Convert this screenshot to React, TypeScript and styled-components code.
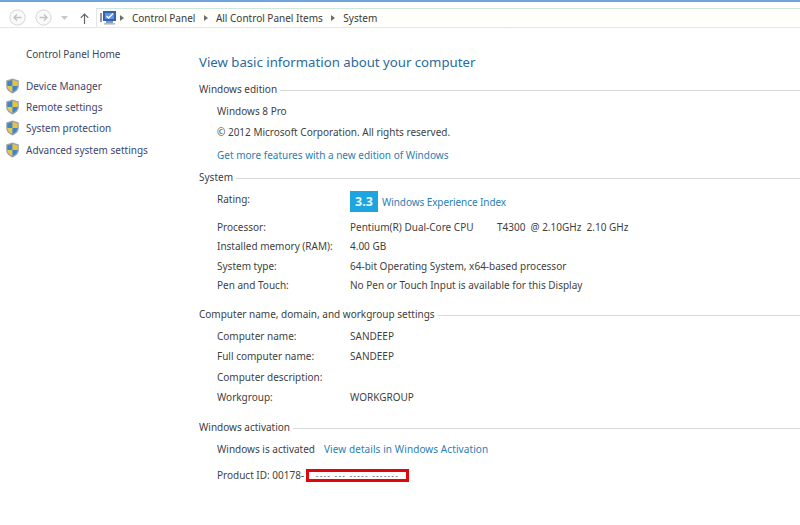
import React from "react";
import styled, { createGlobalStyle } from "styled-components";

const GlobalStyle = createGlobalStyle`
  html, body { margin: 0; padding: 0; background: #fff; }
  body { font-family: "Noto Sans", "Open Sans", sans-serif; font-size: 10px; color: #3f3f3f; }
`;

const Window = styled.div`
  width: 800px;
  height: 525px;
  overflow: hidden;
  background: #fff;
  display: flex;
  flex-direction: column;
`;

const TitleStrip = styled.div`
  height: 2px;
  background: #6fa3dc;
  flex: none;
`;

const Toolbar = styled.div`
  height: 26px;
  box-sizing: border-box;
  padding-top: 6px;
  display: flex;
  align-items: flex-start;
  flex: none;
  border-bottom: 1px solid #e6e6e6;
`;

const NavGroup = styled.div`
  width: 96px;
  height: 19px;
  flex: none;
  display: flex;
  align-items: center;
  padding-left: 9px;
  box-sizing: border-box;
`;

const AddressBar = styled.div`
  flex: 1;
  height: 19px;
  display: flex;
  align-items: center;
  box-sizing: border-box;
  border-top: 1px solid #cfe6e4;
  border-left: 1px solid #e6e6e6;
  background: linear-gradient(#fffef6, #fff);
  padding-left: 3px;
  color: #3a3a3a;
`;

const Crumb = styled.span`
  margin-right: 8.5px;
`;

const Sep = styled.svg`
  width: 4px;
  height: 6px;
  margin-right: 8px;
  flex: none;
`;

const Body = styled.div`
  flex: 1;
  display: flex;
`;

const Side = styled.div`
  width: 199px;
  flex: none;
  padding-top: 18px;
  box-sizing: border-box;
`;

const HomeLink = styled.div`
  padding-left: 26px;
  height: 16px;
  line-height: 16px;
  margin-bottom: 13px;
  color: #3a4656;
`;

const SideLink = styled.div`
  display: flex;
  align-items: center;
  height: 21.4px;
  padding-left: 5px;
  color: #3b4670;
`;

const ShieldIcon = styled.svg`
  width: 15px;
  height: 16px;
  margin-right: 6px;
  flex: none;
`;

const Main = styled.div`
  flex: 1;
  padding-top: 24px;
`;

const PageTitle = styled.div`
  font-size: 13.2px;
  line-height: 20px;
  color: #2a6a9e;
  margin-bottom: 9px;
`;

const Section = styled.div<{ $gap: number }>`
  display: flex;
  align-items: center;
  height: 16px;
  margin-top: ${(p) => p.$gap}px;
  color: #404040;
  &::after {
    content: "";
    flex: 1;
    height: 1px;
    margin: 2px 0 0 3px;
    background: #d9d9d9;
  }
`;

const Row = styled.div<{ $top: number }>`
  display: flex;
  align-items: center;
  height: 16px;
  padding-left: 18px;
  margin-top: ${(p) => p.$top}px;
  white-space: pre;
`;

const Label = styled.div`
  width: 133px;
  flex: none;
`;

const Link = styled.span<{ $offset?: number; $track?: number }>`
  color: #2a80b4;
  margin-left: ${(p) => p.$offset ?? 0}px;
  letter-spacing: ${(p) => p.$track ?? 0}px;
`;

const ScoreBadge = styled.span`
  width: 28px;
  height: 21px;
  background: #1ea4df;
  color: #e8f6fc;
  font-weight: 700;
  font-size: 12.5px;
  display: inline-flex;
  align-items: center;
  justify-content: center;
  margin-right: 4px;
`;

const RatingRow = styled(Row)`
  align-items: flex-start;
  height: 21px;
`;

const RatingValue = styled.div`
  display: flex;
  align-items: center;
  margin-top: -1px;
`;

const RedactBox = styled.span`
  width: 103px;
  height: 13px;
  box-sizing: border-box;
  border: 3px solid #e2060c;
  margin-left: 2px;
  display: inline-flex;
  align-items: center;
  justify-content: center;
  background: #fff;
  color: #77778a;
  font-size: 7px;
  font-weight: 700;
  line-height: 7px;
  letter-spacing: 1.6px;
  overflow: hidden;
`;

const Shield = () => (
  <ShieldIcon viewBox="0 0 15 16">
    <path d="M7.5 .6 L13.8 2.6 V8 C13.8 11.8 10.6 14.2 7.5 15.4 C4.4 14.2 1.2 11.8 1.2 8 V2.6 Z" fill="#98a4aa" />
    <path d="M7.5 2 V8 H2.4 V3.5 Z" fill="#3f86c9" />
    <path d="M7.5 2 L12.6 3.5 V8 H7.5 Z" fill="#e9c23c" />
    <path d="M2.4 8 H7.5 V14 C5 13 2.6 11 2.4 8 Z" fill="#e6c84a" />
    <path d="M7.5 8 H12.6 C12.4 11 10 13 7.5 14 Z" fill="#3f86c9" />
  </ShieldIcon>
);

const Chevron = () => (
  <Sep viewBox="0 0 4 6">
    <path d="M0 0 L4 3 L0 6 Z" fill="#6d6d6d" />
  </Sep>
);

const NavCircle = ({ dir }: { dir: "l" | "r" }) => (
  <svg width="17" height="17" viewBox="0 0 17 17" style={{ marginRight: 9, flex: "none" }}>
    <circle cx="8.5" cy="8.5" r="7.6" fill="#fafafa" stroke="#d4d4d4" strokeWidth="1" />
    <path
      d={dir === "l" ? "M12.5 8.5 H5 M8 5.5 L5 8.5 L8 11.5" : "M4.5 8.5 H12 M9 5.5 L12 8.5 L9 11.5"}
      fill="none"
      stroke="#c2c2c2"
      strokeWidth="1.4"
    />
  </svg>
);

const FolderGlyph = () => (
  <svg width="17" height="16" viewBox="0 0 17 16" style={{ marginRight: 3, flex: "none" }}>
    <rect x="0" y="3" width="2" height="9" fill="#8d97a8" />
    <rect x="3" y="1" width="13" height="10" fill="#2f62b8" />
    <rect x="5" y="3" width="9" height="6" fill="#5f93df" />
    <path d="M6.5 6 L8.6 8 L13 3.5" fill="none" stroke="#fff" strokeWidth="1.4" />
    <rect x="6" y="11" width="7" height="2" fill="#8d97a8" />
    <rect x="4" y="13" width="11" height="1.6" fill="#b3bac6" />
  </svg>
);

const App: React.FC = () => {
  const sideLinks = ["Device Manager", "Remote settings", "System protection", "Advanced system settings"];

  return (
    <Window>
      <GlobalStyle />
      <TitleStrip />
      <Toolbar>
        <NavGroup>
          <NavCircle dir="l" />
          <NavCircle dir="r" />
          <svg width="7" height="4" viewBox="0 0 7 4" style={{ marginRight: 12, flex: "none" }}>
            <path d="M0 0 H7 L3.5 4 Z" fill="#c8c8c8" />
          </svg>
          <svg width="9" height="11" viewBox="0 0 9 11" style={{ flex: "none", marginTop: 2 }}>
            <path d="M4.5 11 V1 M.7 4.8 L4.5 1 L8.3 4.8" fill="none" stroke="#666" strokeWidth="1.2" />
          </svg>
        </NavGroup>
        <AddressBar>
          <FolderGlyph />
          <Chevron />
          <Crumb>Control Panel</Crumb>
          <Chevron />
          <Crumb>All Control Panel Items</Crumb>
          <Chevron />
          <Crumb>System</Crumb>
        </AddressBar>
      </Toolbar>
      <Body>
        <Side>
          <HomeLink>Control Panel Home</HomeLink>
          {sideLinks.map((l) => (
            <SideLink key={l}>
              <Shield />
              {l}
            </SideLink>
          ))}
        </Side>
        <Main>
          <PageTitle>View basic information about your computer</PageTitle>
          <Section $gap={0}>Windows edition</Section>
          <Row $top={6}>Windows 8 Pro</Row>
          <Row $top={5}>© 2012 Microsoft Corporation. All rights reserved.</Row>
          <Row $top={7}>
            <Link>Get more features with a new edition of Windows</Link>
          </Row>
          <Section $gap={6}>System</Section>
          <RatingRow $top={7}>
            <Label>Rating:</Label>
            <RatingValue>
              <ScoreBadge>3.3</ScoreBadge>
              <Link $track={-0.08}>Windows Experience Index</Link>
            </RatingValue>
          </RatingRow>
          <Row $top={6}>
            <Label>Processor:</Label>Pentium(R) Dual-Core CPU         T4300  @ 2.10GHz  2.10 GHz
          </Row>
          <Row $top={3}>
            <Label>Installed memory (RAM):</Label>4.00 GB
          </Row>
          <Row $top={4}>
            <Label>System type:</Label>64-bit Operating System, x64-based processor
          </Row>
          <Row $top={3}>
            <Label>Pen and Touch:</Label>No Pen or Touch Input is available for this Display
          </Row>
          <Section $gap={13}>Computer name, domain, and workgroup settings</Section>
          <Row $top={6}>
            <Label>Computer name:</Label>SANDEEP
          </Row>
          <Row $top={4}>
            <Label>Full computer name:</Label>SANDEEP
          </Row>
          <Row $top={5}>
            <Label>Computer description:</Label>
          </Row>
          <Row $top={4}>
            <Label>Workgroup:</Label>WORKGROUP
          </Row>
          <Section $gap={14}>Windows activation</Section>
          <Row $top={6}>
            Windows is activated<Link $offset={9} $track={0.09}>View details in Windows Activation</Link>
          </Row>
          <Row $top={10}>
            Product ID: 00178-<RedactBox>---- --- ----- -------</RedactBox>
          </Row>
        </Main>
      </Body>
    </Window>
  );
};

export default App;
